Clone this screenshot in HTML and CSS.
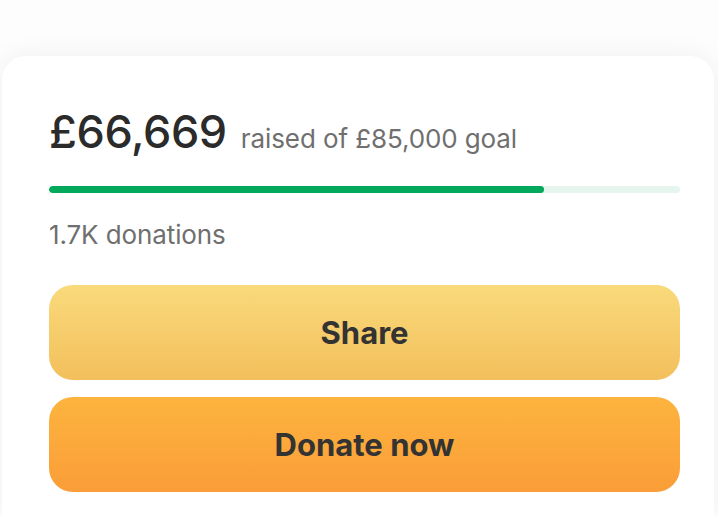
FILE: index.html
```html
<!DOCTYPE html>
<html>
<head>
<meta charset="utf-8">
<link rel="stylesheet" href="styles.css">
</head>
<body>
<div class="card">
  <div class="amount-row">
    <span class="amount">£66,669</span>
    <span class="goal">raised of £85,000 goal</span>
  </div>
  <div class="track"><div class="fill" style="width:78.4%"></div></div>
  <div class="count">1.7K donations</div>
  <div class="buttons">
    <button class="btn share">Share</button>
    <button class="btn donate">Donate now</button>
  </div>
</div>
</body>
</html>
```
FILE: styles.css
```css
html, body {
  margin: 0;
  padding: 0;
  background: #fdfdfd;
  overflow: hidden;
  height: 516px;
}
body {
  font-family: Inter, "Noto Sans", sans-serif;
}
.card {
  box-sizing: border-box;
  margin: 56px 4px 0 2px;
  background: #fff;
  border-radius: 24px 24px 0 0;
  box-shadow: 0 0 28px rgba(0, 0, 0, 0.06);
  padding: 49px 34px 0 47px;
  height: 460px;
}
.amount-row {
  display: flex;
  align-items: baseline;
  gap: 14px;
  line-height: 1.2;
}
.amount {
  font-size: 45px;
  font-weight: 500;
  color: #2b2b2b;
  letter-spacing: -0.4px;
}
.goal {
  font-size: 26px;
  color: #6f6f6f;
  letter-spacing: -0.1px;
}
.track {
  margin-top: 27px;
  height: 7px;
  border-radius: 4px;
  background: #e6f5ee;
  overflow: hidden;
}
.fill {
  height: 100%;
  background: #02a95c;
  border-radius: 4px;
}
.count {
  margin-top: 26px;
  font-size: 26px;
  line-height: 1.2;
  color: #6f6f6f;
  letter-spacing: -0.1px;
}
.buttons {
  margin-top: 35px;
  display: flex;
  flex-direction: column;
  gap: 17px;
}
.btn {
  height: 95px;
  border: none;
  border-radius: 24px;
  font-family: Inter, "Noto Sans", sans-serif;
  font-size: 31px;
  font-weight: 700;
  color: #333;
  padding: 0;
}
.share {
  background: linear-gradient(#f9da7b, #f3bf5c);
}
.donate {
  background: linear-gradient(#fdb43e, #fa9d38);
}
```
